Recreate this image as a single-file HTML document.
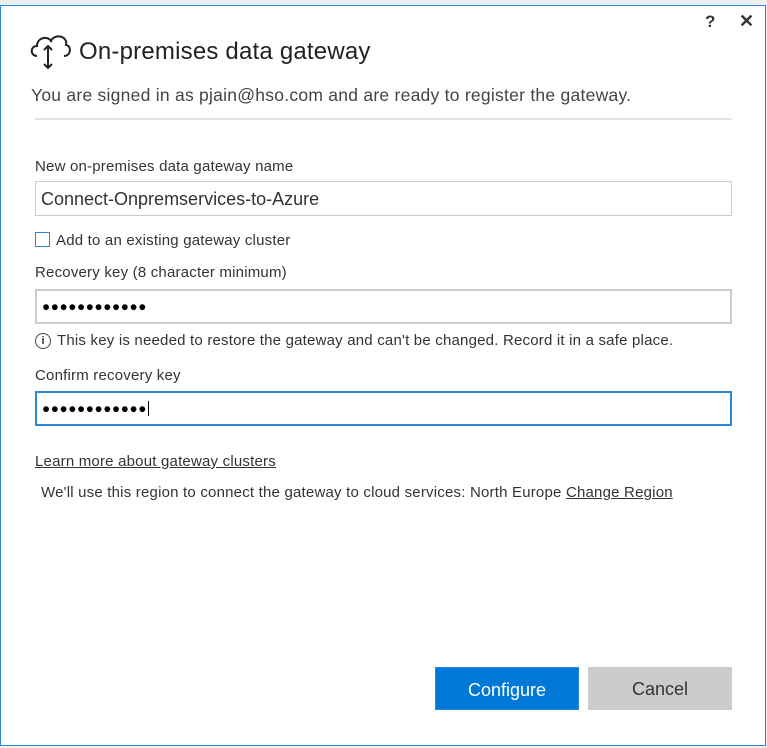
<!DOCTYPE html>
<html><head><style>
body{margin:0;width:767px;height:748px;background:#eef0f2;position:relative;overflow:hidden;font-family:"Liberation Sans",sans-serif;color:#333}
.dlg{position:absolute;left:0;top:5px;width:764px;height:739px;background:#fff;border:1px solid #2b88d8}
.a{position:absolute;white-space:nowrap}
.t{font-size:15px;letter-spacing:0.2px}
.inp{position:absolute;left:35px;width:697px;height:35px;border:2px solid #ccc;box-sizing:border-box;background:#fff}
.dots{position:absolute;left:5px;top:8px;font-size:13.5px;letter-spacing:0.6px;color:#000}
.btn{position:absolute;top:667px;width:144px;height:43px;font-size:18px;text-align:center;line-height:45px}
</style></head><body>
<div class="dlg"></div>
<div class="a" style="left:705px;top:12px;font-size:17px;font-weight:bold;color:#333">?</div>
<div class="a" style="left:739px;top:11px;font-size:18px;font-weight:bold;color:#333">✕</div>
<svg class="a" style="left:28px;top:30px" width="44" height="40" viewBox="0 0 44 40" fill="none" stroke="#222" stroke-width="2">
<path d="M9 26 C2 26 2 16 9 16 C9 8 19 5 23 11 C27 3 40 6 38 15 C44 16 43 26 36 26"/>
<path d="M20 16 L20 38 M16 20 L20 16 L24 20 M16 34 L20 38 L24 34"/>
</svg>
<div class="a" style="left:79px;top:38px;font-size:24px;letter-spacing:0.2px;color:#222">On-premises data gateway</div>
<div class="a" style="left:31px;top:85px;font-size:17.5px;letter-spacing:0.25px;color:#444">You are signed in as pjain@hso.com and are ready to register the gateway.</div>
<div class="a" style="left:35px;top:118px;width:697px;height:2px;background:#e3e3e3"></div>
<div class="a t" style="left:35px;top:158px">New on-premises data gateway name</div>
<div class="inp" style="top:181px;border-width:1px"><span class="a" style="left:5px;top:7px;font-size:18px;color:#333">Connect-Onpremservices-to-Azure</span></div>
<div class="a" style="left:35px;top:232px;width:13px;height:13px;border:1px solid #2b88d8"></div>
<div class="a t" style="left:56px;top:232px">Add to an existing gateway cluster</div>
<div class="a t" style="left:35px;top:264px">Recovery key (8 character minimum)</div>
<div class="inp" style="top:289px"><span class="dots">●●●●●●●●●●●●</span></div>
<div class="a" style="left:35px;top:333px;width:14px;height:14px;border:1.5px solid #444;border-radius:50%;font-size:11px;line-height:14px;text-align:center;font-weight:bold">i</div>
<div class="a t" style="left:57px;top:332px">This key is needed to restore the gateway and can't be changed. Record it in a safe place.</div>
<div class="a t" style="left:35px;top:367px">Confirm recovery key</div>
<div class="inp" style="top:391px;border-color:#2b88d8"><span class="dots">●●●●●●●●●●●●<span style="border-left:1.5px solid #000;margin-left:1px"></span></span></div>
<div class="a t" style="left:35px;top:453px;text-decoration:underline">Learn more about gateway clusters</div>
<div class="a t" style="left:41px;top:484px">We'll use this region to connect the gateway to cloud services: North Europe <span style="text-decoration:underline">Change Region</span></div>
<div class="btn" style="left:435px;background:#0078d7;color:#fff;border:1px solid #2b88d8;box-sizing:border-box">Configure</div>
<div class="btn" style="left:588px;background:#cccccc;color:#333">Cancel</div>
</body></html>
